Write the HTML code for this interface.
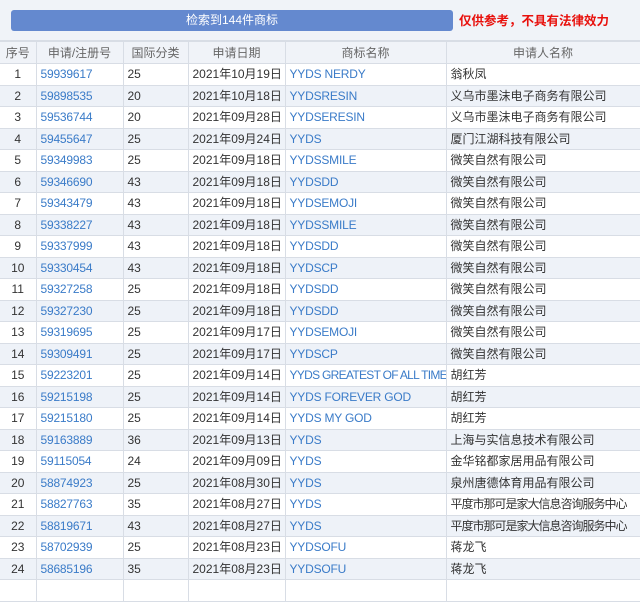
<!DOCTYPE html>
<html><head><meta charset="utf-8"><style>
body{margin:0;width:640px;height:583px;background:#fff;font-family:"Liberation Sans","Noto Sans CJK SC",sans-serif;font-size:12px;color:#333;overflow:hidden}
.top{height:41px;background:#f0f3f8;position:relative;border-bottom:1px solid #d8dde5;box-sizing:border-box}
.btn{position:absolute;left:11px;top:10px;width:442px;height:21px;background:#6489cf;border-radius:3px;color:#fff;text-align:center;line-height:21px;font-size:12px}
.warn{position:absolute;left:459px;top:11px;color:#e8100c;font-size:12.5px;font-weight:bold;line-height:20px}
table{border-collapse:collapse;table-layout:fixed;width:640px}
td,th{border:1px solid #d8dde5;height:20.5px;padding:0 0 0 4px;white-space:nowrap;overflow:hidden;line-height:20px;vertical-align:middle}
td.l{letter-spacing:-0.2px}
td.s{letter-spacing:-1px}
th{font-weight:normal;color:#666;background:#f0f3f8;height:21px;text-align:center;padding:0}
td:first-child{text-align:center;padding:0}
tr:nth-child(odd) td{background:#eef2f8}
td.l{color:#3a7bc8}
tr td:first-child,tr th:first-child{border-left:none}
</style></head><body>
<div class="top"><div class="btn">检索到144件商标</div><div class="warn">仅供参考，不具有法律效力</div></div>
<table>
<colgroup><col style="width:36px"><col style="width:87px"><col style="width:65px"><col style="width:97px"><col style="width:161px"><col style="width:194px"></colgroup>
<tr><th>序号</th><th>申请/注册号</th><th>国际分类</th><th>申请日期</th><th>商标名称</th><th>申请人名称</th></tr>
<tr><td>1</td><td class="l">59939617</td><td>25</td><td>2021年10月19日</td><td class="l">YYDS NERDY</td><td>翁秋凤</td></tr>
<tr><td>2</td><td class="l">59898535</td><td>20</td><td>2021年10月18日</td><td class="l">YYDSRESIN</td><td>义乌市墨沫电子商务有限公司</td></tr>
<tr><td>3</td><td class="l">59536744</td><td>20</td><td>2021年09月28日</td><td class="l">YYDSERESIN</td><td>义乌市墨沫电子商务有限公司</td></tr>
<tr><td>4</td><td class="l">59455647</td><td>25</td><td>2021年09月24日</td><td class="l">YYDS</td><td>厦门江湖科技有限公司</td></tr>
<tr><td>5</td><td class="l">59349983</td><td>25</td><td>2021年09月18日</td><td class="l">YYDSSMILE</td><td>微笑自然有限公司</td></tr>
<tr><td>6</td><td class="l">59346690</td><td>43</td><td>2021年09月18日</td><td class="l">YYDSDD</td><td>微笑自然有限公司</td></tr>
<tr><td>7</td><td class="l">59343479</td><td>43</td><td>2021年09月18日</td><td class="l">YYDSEMOJI</td><td>微笑自然有限公司</td></tr>
<tr><td>8</td><td class="l">59338227</td><td>43</td><td>2021年09月18日</td><td class="l">YYDSSMILE</td><td>微笑自然有限公司</td></tr>
<tr><td>9</td><td class="l">59337999</td><td>43</td><td>2021年09月18日</td><td class="l">YYDSDD</td><td>微笑自然有限公司</td></tr>
<tr><td>10</td><td class="l">59330454</td><td>43</td><td>2021年09月18日</td><td class="l">YYDSCP</td><td>微笑自然有限公司</td></tr>
<tr><td>11</td><td class="l">59327258</td><td>25</td><td>2021年09月18日</td><td class="l">YYDSDD</td><td>微笑自然有限公司</td></tr>
<tr><td>12</td><td class="l">59327230</td><td>25</td><td>2021年09月18日</td><td class="l">YYDSDD</td><td>微笑自然有限公司</td></tr>
<tr><td>13</td><td class="l">59319695</td><td>25</td><td>2021年09月17日</td><td class="l">YYDSEMOJI</td><td>微笑自然有限公司</td></tr>
<tr><td>14</td><td class="l">59309491</td><td>25</td><td>2021年09月17日</td><td class="l">YYDSCP</td><td>微笑自然有限公司</td></tr>
<tr><td>15</td><td class="l">59223201</td><td>25</td><td>2021年09月14日</td><td class="l" style="letter-spacing:-0.7px">YYDS GREATEST OF ALL TIME</td><td>胡红芳</td></tr>
<tr><td>16</td><td class="l">59215198</td><td>25</td><td>2021年09月14日</td><td class="l">YYDS FOREVER GOD</td><td>胡红芳</td></tr>
<tr><td>17</td><td class="l">59215180</td><td>25</td><td>2021年09月14日</td><td class="l">YYDS MY GOD</td><td>胡红芳</td></tr>
<tr><td>18</td><td class="l">59163889</td><td>36</td><td>2021年09月13日</td><td class="l">YYDS</td><td>上海与实信息技术有限公司</td></tr>
<tr><td>19</td><td class="l">59115054</td><td>24</td><td>2021年09月09日</td><td class="l">YYDS</td><td>金华铭都家居用品有限公司</td></tr>
<tr><td>20</td><td class="l">58874923</td><td>25</td><td>2021年08月30日</td><td class="l">YYDS</td><td>泉州唐德体育用品有限公司</td></tr>
<tr><td>21</td><td class="l">58827763</td><td>35</td><td>2021年08月27日</td><td class="l">YYDS</td><td class="s">平度市那可是家大信息咨询服务中心</td></tr>
<tr><td>22</td><td class="l">58819671</td><td>43</td><td>2021年08月27日</td><td class="l">YYDS</td><td class="s">平度市那可是家大信息咨询服务中心</td></tr>
<tr><td>23</td><td class="l">58702939</td><td>25</td><td>2021年08月23日</td><td class="l">YYDSOFU</td><td>蒋龙飞</td></tr>
<tr><td>24</td><td class="l">58685196</td><td>35</td><td>2021年08月23日</td><td class="l">YYDSOFU</td><td>蒋龙飞</td></tr>
<tr><td></td><td></td><td></td><td></td><td></td><td></td></tr>
</table>
</body></html>
